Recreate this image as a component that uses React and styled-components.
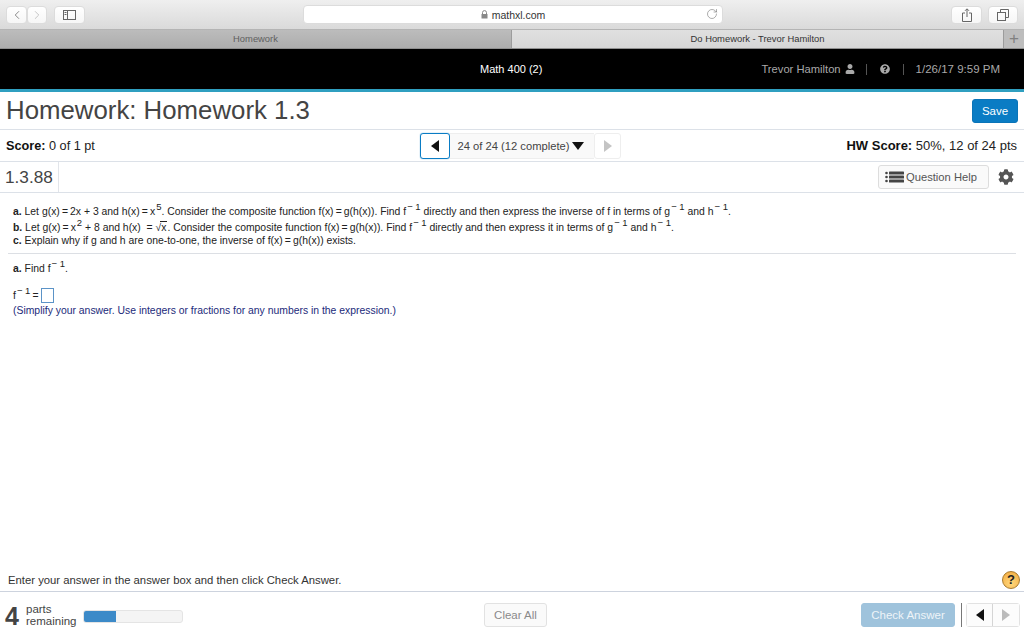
import React from 'react';
import styled, { createGlobalStyle } from 'styled-components';
import { FaUser, FaQuestionCircle, FaCog } from 'react-icons/fa';
import { ChevronLeft, ChevronRight, RotateCw } from 'lucide-react';

const GlobalStyle = createGlobalStyle`
    html, body {
        margin: 0;
        padding: 0;
        background: #fff;
    }
    body {
        font-family: "Liberation Sans", Arial, sans-serif;
        color: #333;
    }
`;

const Page = styled.div`
    display: flex;
    flex-direction: column;
    width: 1024px;
    height: 640px;
    overflow: hidden;
`;

const Toolbar = styled.div`
    display: flex;
    align-items: center;
    flex: 0 0 29px;
    padding: 0 6px 0 6px;
    background: linear-gradient(#efefef, #dadada);
    border-bottom: 1px solid #b4b4b4;
`;

const ToolGroup = styled.div`
    display: flex;
    margin-right: ${p => p.$gap || 0}px;
`;

const ToolButton = styled.div`
    display: flex;
    align-items: center;
    justify-content: center;
    width: ${p => p.$w || 30}px;
    height: 18px;
    background: linear-gradient(#fff, #f6f6f6);
    border: 1px solid #dcdcdc;
    border-radius: 4px;
    box-sizing: border-box;
    color: ${p => p.$faded ? '#b5b5b5' : '#666'};
`;

const AddressBar = styled.div`
    display: flex;
    align-items: center;
    justify-content: center;
    position: relative;
    width: 420px;
    height: 19px;
    margin-left: 218px;
    background: #fff;
    border: 1px solid #dcdcdc;
    border-radius: 4px;
    box-sizing: border-box;
    font-size: 10.5px;
    color: #333;
`;

const Reload = styled.span`
    position: absolute;
    right: 4px;
    top: 2px;
    color: #777;
    display: flex;
`;

const ToolRight = styled.div`
    display: flex;
    gap: 6px;
    margin-left: auto;
`;

const TabBar = styled.div`
    display: flex;
    flex: 0 0 18px;
    font-size: 9.4px;
    line-height: 18px;
    text-align: center;
    border-bottom: 1px solid #8f8f8f;
`;

const Tab = styled.div`
    flex: ${p => p.$active ? '1' : '0 0 511px'};
    color: ${p => p.$active ? '#333' : '#5f5f5f'};
    background: ${p => p.$active ? 'linear-gradient(#e0e0e0, #d6d6d6)' : 'linear-gradient(#bcbcbc, #adadad)'};
    border-right: 1px solid #9c9c9c;
`;

const NewTab = styled.div`
    flex: 0 0 20px;
    background: #bdbdbd;
    color: #808080;
    font-size: 17px;
    font-weight: 300;
    line-height: 17px;
`;

const CourseBar = styled.div`
    display: flex;
    align-items: center;
    flex: 0 0 40px;
    padding-right: 24px;
    background: #000;
    border-bottom: 3px solid #2f9fc0;
    font-size: 11.5px;
    color: #a9a9a9;
`;

const CourseName = styled.div`
    margin-left: 480px;
    font-size: 11px;
    color: #fff;
`;

const User = styled.div`
    display: flex;
    align-items: center;
    gap: 4px;
    margin-left: auto;
    font-size: 11.2px;
`;

const Pipe = styled.div`
    width: 1px;
    height: 11px;
    margin: 0 ${p => p.$right || 13}px 0 ${p => p.$left || 13}px;
    background: #555;
`;

const TitleRow = styled.div`
    display: flex;
    align-items: center;
    justify-content: space-between;
    flex: 0 0 37px;
    padding: 0 6px;
    border-bottom: 1px solid #dce1e8;
`;

const Title = styled.h1`
    margin: 0;
    font-size: 25.8px;
    font-weight: 400;
    color: #444;
`;

const SaveButton = styled.button`
    width: 46px;
    height: 24px;
    padding: 0;
    background: #0a7cc4;
    border: 1px solid #0a74b8;
    border-radius: 3px;
    color: #fff;
    font: 11.5px "Liberation Sans", Arial, sans-serif;
`;

const ScoreRow = styled.div`
    display: grid;
    grid-template-columns: 1fr auto 1fr;
    align-items: center;
    flex: 0 0 31px;
    padding: 0 7px 0 6px;
    border-bottom: 1px solid #dce1e8;
    font-size: 13px;
    color: #222;
    b { color: #111; }
`;

const ScoreLeft = styled.div`
    font-size: 12.7px;
`;

const ScoreRight = styled.div`
    justify-self: end;
`;

const Pager = styled.div`
    display: flex;
    align-items: stretch;
    height: 26px;
    margin-left: 18px;
    font-size: 11.2px;
    color: #444;
`;

const PagerArrow = styled.div`
    display: flex;
    align-items: center;
    justify-content: center;
    width: ${p => p.$w || 30}px;
    box-sizing: border-box;
    border: ${p => p.$focus ? '1px solid #0a7cc4' : '1px solid #eee'};
    border-radius: 3px;
    box-shadow: ${p => p.$focus ? '0 0 1px #0a7cc4' : 'none'};
`;

const PagerLabel = styled.div`
    display: flex;
    align-items: center;
    gap: 3px;
    padding: 0 10px 0 8px;
    background: #f9f9f9;
    border-top: 1px solid #eee;
    border-bottom: 1px solid #eee;
`;

const Triangle = styled.span`
    display: inline-block;
    width: 0;
    height: 0;
    border-style: solid;
    border-color: transparent;
    border-width: 6.5px;
    ${p => p.$dir === 'left' && `border-right: 8px solid ${p.$color}; border-left-width: 0;`}
    ${p => p.$dir === 'right' && `border-left: 8px solid ${p.$color}; border-right-width: 0;`}
    ${p => p.$dir === 'down' && `border-top: 8px solid ${p.$color}; border-bottom-width: 0;`}
`;

const QuestionRow = styled.div`
    display: flex;
    align-items: center;
    flex: 0 0 30px;
    padding-right: 10px;
    border-bottom: 1px solid #dce1e8;
`;

const QuestionNumber = styled.div`
    display: flex;
    align-items: center;
    align-self: stretch;
    padding: 0 5px;
    border-right: 1px solid #e2e5ea;
    font-size: 17.2px;
    color: #444;
`;

const HelpButton = styled.button`
    display: flex;
    align-items: center;
    gap: 2px;
    width: 111px;
    height: 24px;
    margin-left: auto;
    margin-right: 9px;
    padding: 0 0 0 6px;
    background: #fafafa;
    border: 1px solid #ddd;
    border-radius: 3px;
    color: #555;
    font: 11.2px "Liberation Sans", Arial, sans-serif;
`;

const GearIcon = styled.span`
    display: flex;
    color: #555;
`;

const Content = styled.div`
    flex: 1;
    padding: 11px 8px 0 13px;
    font-size: 10.4px;
    color: #222;
`;

const Line = styled.div`
    height: ${p => p.$h || 15}px;
    line-height: ${p => p.$h || 15}px;
    white-space: nowrap;
`;

const Sup = styled.sup`
    font-size: 9.5px;
    line-height: 0;
    vertical-align: 5px;
    margin-left: 1px;
`;

const Radical = styled.span`
    border-top: 1px solid #222;
    padding: 0 1px;
    margin-left: -1px;
`;

const Divider = styled.div`
    height: 1px;
    margin: 6px 0 7px -5px;
    background: #dcdfe4;
`;

const AnswerLine = styled.div`
    display: flex;
    align-items: center;
    height: 17px;
    margin-top: 11px;
    white-space: pre;
`;

const AnswerBox = styled.span`
    display: block;
    width: 11px;
    height: 13px;
    margin-left: 2px;
    border: 1px solid #5b93c7;
`;

const Hint = styled.div`
    height: 14px;
    line-height: 14px;
    color: #1b2a7a;
`;

const Instruction = styled.div`
    display: flex;
    align-items: center;
    justify-content: space-between;
    flex: 0 0 23px;
    padding: 0 4px 0 8px;
    border-bottom: 1px solid #cdd3de;
    font-size: 11.3px;
    color: #333;
`;

const HelpDot = styled.div`
    width: 18px;
    height: 18px;
    border-radius: 50%;
    background: radial-gradient(circle at 50% 70%, #ffd87f, #f2a93b);
    border: 1px solid #a97a2c;
    box-sizing: border-box;
    color: #222;
    font-size: 13px;
    font-weight: 700;
    line-height: 16px;
    text-align: center;
`;

const Footer = styled.div`
    display: flex;
    align-items: flex-start;
    flex: 0 0 48px;
    padding: 11px 4px 0 5px;
    box-sizing: border-box;
`;

const PartsCount = styled.div`
    width: 21px;
    font-size: 25px;
    font-weight: 700;
    line-height: 26px;
    color: #444;
`;

const PartsLabel = styled.div`
    width: 57px;
    margin-top: 1px;
    font-size: 11.5px;
    line-height: 11.5px;
    color: #444;
`;

const Progress = styled.div`
    width: 100px;
    height: 13px;
    margin-top: 7px;
    background: #f4f4f4;
    border: 1px solid #e4e4e4;
    border-radius: 3px;
    box-sizing: border-box;
    overflow: hidden;
`;

const ProgressFill = styled.div`
    height: 100%;
    background: #3c8ac8;
`;

const ClearButton = styled.button`
    width: 63px;
    height: 24px;
    margin-left: 301px;
    padding: 0;
    background: #fafafa;
    border: 1px solid #e2e2e2;
    border-radius: 3px;
    color: #8a8a8a;
    font: 11.5px "Liberation Sans", Arial, sans-serif;
`;

const CheckButton = styled.button`
    width: 94px;
    height: 24px;
    margin-left: auto;
    padding: 0;
    background: #9fc3dc;
    border: 1px solid #9fc3dc;
    border-radius: 3px;
    color: #eef4f8;
    font: 11.5px "Liberation Sans", Arial, sans-serif;
`;

const Separator = styled.div`
    width: 1px;
    height: 24px;
    margin: 0 4px 0 6px;
    background: #777;
`;

const MiniNav = styled.div`
    display: flex;
    height: 24px;
    border: 1px solid #e2e2e2;
    border-radius: 3px;
    box-sizing: border-box;
`;

const MiniArrow = styled.div`
    display: flex;
    align-items: center;
    justify-content: center;
    width: 26px;
    box-sizing: border-box;
    border-right: ${p => p.$divide ? '1px solid #d5d5d5' : 'none'};
    background: #fcfcfc;
`;

const Inv = () => <Sup>− 1</Sup>;

const SidebarIcon = () => (
    <svg width="13" height="10" viewBox="0 0 13 10" fill="none" stroke="#666">
        <rect x="0.5" y="0.5" width="12" height="9" />
        <path d="M4.5 0.5v9M1.5 2.5h2M1.5 4.5h2" />
    </svg>
);

const ShareIcon = () => (
    <svg width="10" height="14" viewBox="0 0 10 14" fill="none" stroke="#666">
        <path d="M3 5H.5v8.5h9V5H7M5 9V1M3 2.8L5 .8l2 2" />
    </svg>
);

const TabsIcon = () => (
    <svg width="12" height="12" viewBox="0 0 12 12" fill="none" stroke="#666">
        <rect x="0.5" y="3.5" width="8" height="8" />
        <path d="M3.5 3.5v-3h8v8h-3" />
    </svg>
);

const LockIcon = () => (
    <svg width="7" height="9" viewBox="0 0 7 9" style={{ marginRight: 4 }}>
        <path d="M1.5 4V2.6a2 2 0 0 1 4 0V4" fill="none" stroke="#888" />
        <rect x="0.5" y="4" width="6" height="4.5" fill="#888" />
    </svg>
);

const ListIcon = () => (
    <svg width="19" height="12" viewBox="0 0 19 12" fill="#444">
        <circle cx="1.5" cy="2" r="1.3" />
        <circle cx="1.5" cy="6" r="1.3" />
        <circle cx="1.5" cy="10" r="1.3" />
        <rect x="4" y="0.6" width="15" height="2.9" rx="0.6" />
        <rect x="4" y="4.6" width="15" height="2.9" rx="0.6" />
        <rect x="4" y="8.6" width="15" height="2.9" rx="0.6" />
    </svg>
);

const App = () => {
    const partsDone = 33;

    return (
        <Page>
            <GlobalStyle />
            <Toolbar>
                <ToolGroup $gap={7}>
                    <ToolButton $w={21}><ChevronLeft size={14} strokeWidth={1.3} /></ToolButton>
                    <ToolButton $w={20} $faded><ChevronRight size={14} strokeWidth={1.3} /></ToolButton>
                </ToolGroup>
                <ToolButton $w={31}><SidebarIcon /></ToolButton>
                <AddressBar>
                    <LockIcon />mathxl.com
                    <Reload><RotateCw size={12} strokeWidth={1.2} /></Reload>
                </AddressBar>
                <ToolRight>
                    <ToolButton $w={31}><ShareIcon /></ToolButton>
                    <ToolButton $w={30}><TabsIcon /></ToolButton>
                </ToolRight>
            </Toolbar>
            <TabBar>
                <Tab>Homework</Tab>
                <Tab $active>Do Homework - Trevor Hamilton</Tab>
                <NewTab>+</NewTab>
            </TabBar>
            <CourseBar>
                <CourseName>Math 400 (2)</CourseName>
                <User>Trevor Hamilton <FaUser size={10} /></User>
                <Pipe $left={11} />
                <FaQuestionCircle size={10} />
                <Pipe $right={12} />
                <span>1/26/17 9:59 PM</span>
            </CourseBar>
            <TitleRow>
                <Title>Homework: Homework 1.3</Title>
                <SaveButton>Save</SaveButton>
            </TitleRow>
            <ScoreRow>
                <ScoreLeft><b>Score:</b> 0 of 1 pt</ScoreLeft>
                <Pager>
                    <PagerArrow $focus><Triangle $dir="left" $color="#111" /></PagerArrow>
                    <PagerLabel>24 of 24 (12 complete) <Triangle $dir="down" $color="#111" /></PagerLabel>
                    <PagerArrow $w={27}><Triangle $dir="right" $color="#c4c4c4" /></PagerArrow>
                </Pager>
                <ScoreRight><b>HW Score:</b> 50%, 12 of 24 pts</ScoreRight>
            </ScoreRow>
            <QuestionRow>
                <QuestionNumber>1.3.88</QuestionNumber>
                <HelpButton><ListIcon /> Question Help</HelpButton>
                <GearIcon><FaCog size={16} /></GearIcon>
            </QuestionRow>
            <Content>
                <Line $h={16}>
                    <b>a.</b> Let g(x){'\u2009'}={'\u2009'}2x + 3 and h(x){'\u2009'}={'\u2009'}x<Sup>5</Sup>. Consider the composite function f(x){'\u2009'}={'\u2009'}g(h(x)). Find f<Inv /> directly and then express the inverse of f in terms of g<Inv /> and h<Inv />.
                </Line>
                <Line>
                    <b>b.</b> Let g(x){'\u2009'}={'\u2009'}x<Sup>2</Sup> + 8 and h(x) &nbsp;= √<Radical>x</Radical>. Consider the composite function f(x){'\u2009'}={'\u2009'}g(h(x)). Find f<Inv /> directly and then express it in terms of g<Inv /> and h<Inv />.
                </Line>
                <Line $h={12}>
                    <b>c.</b> Explain why if g and h are one-to-one, the inverse of f(x){'\u2009'}={'\u2009'}g(h(x)) exists.
                </Line>
                <Divider />
                <Line>
                    <b>a.</b> Find f<Inv />.
                </Line>
                <AnswerLine><span>f<Inv />{'\u2009'}=</span><AnswerBox /></AnswerLine>
                <Hint>(Simplify your answer. Use integers or fractions for any numbers in the expression.)</Hint>
            </Content>
            <Instruction>
                <span>Enter your answer in the answer box and then click Check Answer.</span>
                <HelpDot>?</HelpDot>
            </Instruction>
            <Footer>
                <PartsCount>4</PartsCount>
                <PartsLabel>parts remaining</PartsLabel>
                <Progress><ProgressFill style={{ width: `${partsDone}%` }} /></Progress>
                <ClearButton>Clear All</ClearButton>
                <CheckButton>Check Answer</CheckButton>
                <Separator />
                <MiniNav>
                    <MiniArrow $divide><Triangle $dir="left" $color="#111" /></MiniArrow>
                    <MiniArrow><Triangle $dir="right" $color="#bbb" /></MiniArrow>
                </MiniNav>
            </Footer>
        </Page>
    );
};

export default App;
